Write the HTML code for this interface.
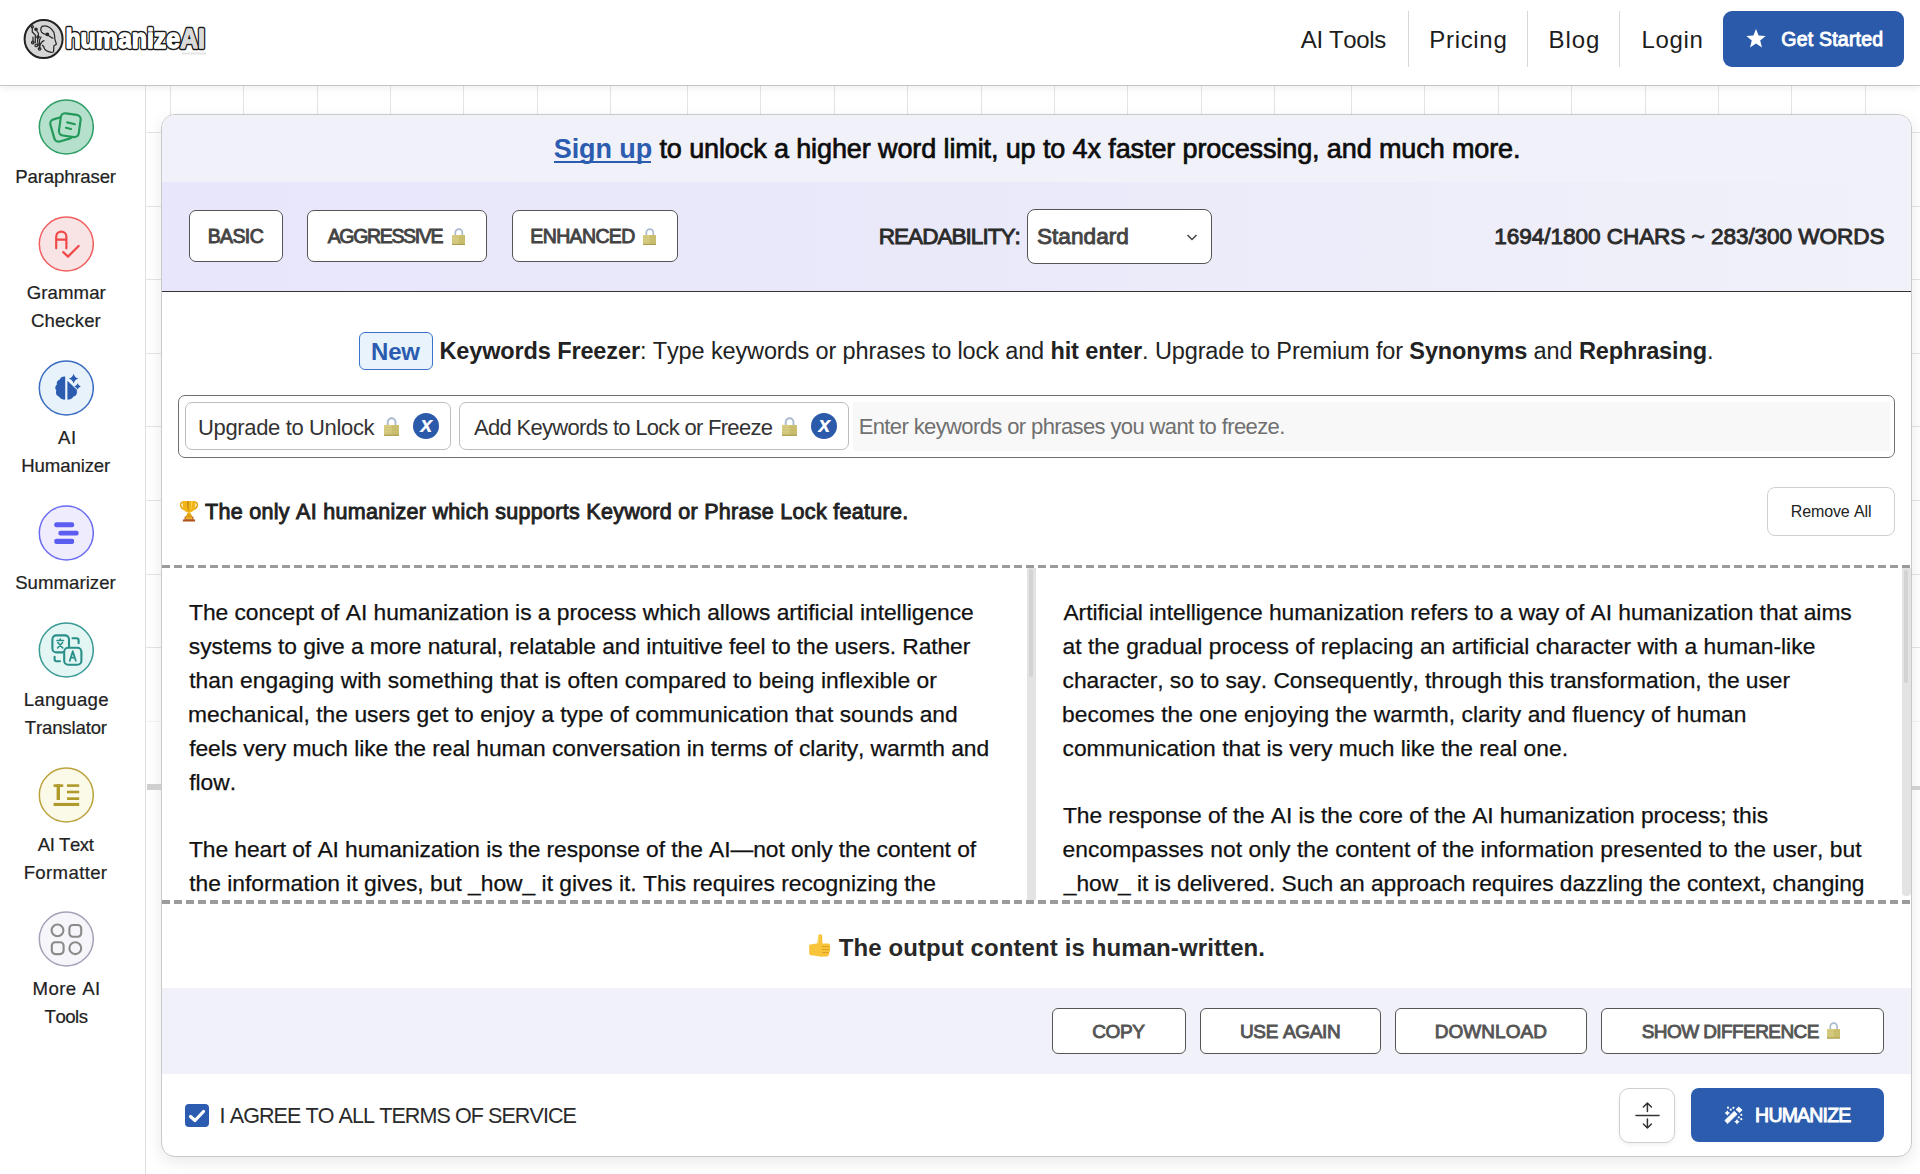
<!DOCTYPE html>
<html><head><meta charset="utf-8">
<style>
*{box-sizing:border-box;margin:0;padding:0}
html,body{width:1920px;height:1174px;overflow:hidden;background:#fff;font-family:"Liberation Sans",sans-serif;color:#222}
.abs{position:absolute}
.t{position:absolute;white-space:nowrap;font-kerning:none}
#header{position:absolute;left:0;top:0;width:1920px;height:86px;background:#fff;border-bottom:1px solid #c6c6c6;z-index:5;box-shadow:0 2px 8px rgba(0,0,0,.07)}
#sidebar{position:absolute;left:0;top:86px;width:146px;height:1088px;background:#fff;border-right:1px solid #e0e0e0;z-index:3}
#grid{position:absolute;left:146px;top:86px;width:1774px;height:1088px;background:#fff;-webkit-mask-image:linear-gradient(to bottom,#000 0,#000 560px,transparent 700px);mask-image:linear-gradient(to bottom,#000 0,#000 560px,transparent 700px)}
.sep{position:absolute;top:11px;width:1px;height:56px;background:#d8d8d8}
#card{position:absolute;left:161px;top:114px;width:1751px;height:1043px;border:1px solid #c9c9c9;border-radius:14px;background:#fff;overflow:hidden;box-shadow:0 5px 16px rgba(0,0,0,.09)}
.sbl{position:absolute;left:0;width:132.6px;text-align:center;font-size:18px;line-height:28px;color:#222;white-space:nowrap}
.bb{position:absolute;border:1.6px solid #555;border-radius:6px;background:#fff}
.chip{position:absolute;border:1.5px solid #bdbdbd;border-radius:6px;background:#fff}
</style></head><body>
<div id="grid"><svg width="1774" height="1088" style="position:absolute;left:0;top:0" shape-rendering="crispEdges"><rect x="24" y="0" width="1" height="1088" fill="#e4e4e4"/><rect x="97" y="0" width="1" height="1088" fill="#e4e4e4"/><rect x="171" y="0" width="1" height="1088" fill="#e4e4e4"/><rect x="244" y="0" width="1" height="1088" fill="#e4e4e4"/><rect x="317" y="0" width="1" height="1088" fill="#e4e4e4"/><rect x="391" y="0" width="1" height="1088" fill="#e4e4e4"/><rect x="464" y="0" width="1" height="1088" fill="#e4e4e4"/><rect x="541" y="0" width="1" height="1088" fill="#e4e4e4"/><rect x="614" y="0" width="1" height="1088" fill="#e4e4e4"/><rect x="688" y="0" width="1" height="1088" fill="#e4e4e4"/><rect x="761" y="0" width="1" height="1088" fill="#e4e4e4"/><rect x="835" y="0" width="1" height="1088" fill="#e4e4e4"/><rect x="908" y="0" width="1" height="1088" fill="#e4e4e4"/><rect x="981" y="0" width="1" height="1088" fill="#e4e4e4"/><rect x="1055" y="0" width="1" height="1088" fill="#e4e4e4"/><rect x="1128" y="0" width="1" height="1088" fill="#e4e4e4"/><rect x="1205" y="0" width="1" height="1088" fill="#e4e4e4"/><rect x="1278" y="0" width="1" height="1088" fill="#e4e4e4"/><rect x="1352" y="0" width="1" height="1088" fill="#e4e4e4"/><rect x="1425" y="0" width="1" height="1088" fill="#e4e4e4"/><rect x="1499" y="0" width="1" height="1088" fill="#e4e4e4"/><rect x="1572" y="0" width="1" height="1088" fill="#e4e4e4"/><rect x="1645" y="0" width="1" height="1088" fill="#e4e4e4"/><rect x="1719" y="0" width="1" height="1088" fill="#e4e4e4"/><rect x="0" y="46" width="1774" height="1" fill="#e4e4e4"/><rect x="0" y="120" width="1774" height="1" fill="#e4e4e4"/><rect x="0" y="193" width="1774" height="1" fill="#e4e4e4"/><rect x="0" y="267" width="1774" height="1" fill="#e4e4e4"/><rect x="0" y="340" width="1774" height="1" fill="#e4e4e4"/><rect x="0" y="414" width="1774" height="1" fill="#e4e4e4"/><rect x="0" y="488" width="1774" height="1" fill="#e4e4e4"/><rect x="0" y="561" width="1774" height="1" fill="#e4e4e4"/><rect x="0" y="635" width="1774" height="1" fill="#e4e4e4"/><rect x="0" y="708" width="1774" height="1" fill="#e4e4e4"/><rect x="0" y="782" width="1774" height="1" fill="#e4e4e4"/><rect x="0" y="856" width="1774" height="1" fill="#e4e4e4"/></svg></div>
<div id="header">
<!-- logo -->
  <svg class="abs" style="left:0;top:0" width="230" height="80" viewBox="0 0 230 80">
    <circle cx="43.6" cy="39" r="19" fill="#d6d6d6" stroke="#222" stroke-width="2"/>
    <g fill="none" stroke="#2a2a2a" stroke-width="1.25" stroke-linejoin="round" stroke-linecap="round">
      <path d="M42.1 26.4 C45 25.5 50 26 53.9 32.4 C54.6 35 54.8 37 54.8 38.9 L56.4 44.2 L53.9 45.8 L53.5 52 L51.1 52.4 C48 51.5 45 50 44.5 48.7 C44 47 43.5 46 42.5 45.4"/>
      <path d="M42.1 26.4 C40.5 28 40.5 30 41.5 32 C43 34 48 35 50 36.5 C51 37.5 52 38 53 38"/>
      <circle cx="47.3" cy="34.3" r="1.3" fill="#2a2a2a"/>
      <path d="M32.3 27.3 L32.3 32 L35.3 35 L35.3 42.5 M36 29.5 L38.5 33.5 L37.5 41 L38.3 45.4 M33 37 L33 42.5 M41 37 L39.5 40 L39.5 48.5 M44 40.6 C41.5 41.5 40 43 39.5 48.5"/>
      <circle cx="32.3" cy="26.8" r="1.1"/><circle cx="32.8" cy="42.5" r="1.3"/><circle cx="36.3" cy="45.4" r="1.3"/><circle cx="39.6" cy="48.8" r="1.3"/><circle cx="36" cy="29.2" r="1.2" fill="#2a2a2a"/><circle cx="38" cy="37" r="1.2" fill="#2a2a2a"/>
    </g>
    <g transform="translate(65.4 48.3) scale(0.873 1)" font-family="Liberation Sans" font-weight="bold" font-size="28.5" stroke-linejoin="round"><text x="0.00" y="0" fill="#fff" stroke="#1a1a1a" stroke-width="4.4" paint-order="stroke">h</text><text x="0.00" y="0" fill="#fff" stroke="#fff" stroke-width="1.4">h</text><text x="17.41" y="0" fill="#fff" stroke="#1a1a1a" stroke-width="4.4" paint-order="stroke">u</text><text x="17.41" y="0" fill="#fff" stroke="#fff" stroke-width="1.4">u</text><text x="34.82" y="0" fill="#fff" stroke="#1a1a1a" stroke-width="4.4" paint-order="stroke">m</text><text x="34.82" y="0" fill="#fff" stroke="#fff" stroke-width="1.4">m</text><text x="60.16" y="0" fill="#fff" stroke="#1a1a1a" stroke-width="4.4" paint-order="stroke">a</text><text x="60.16" y="0" fill="#fff" stroke="#fff" stroke-width="1.4">a</text><text x="76.01" y="0" fill="#fff" stroke="#1a1a1a" stroke-width="4.4" paint-order="stroke">n</text><text x="76.01" y="0" fill="#fff" stroke="#fff" stroke-width="1.4">n</text><text x="93.42" y="0" fill="#fff" stroke="#1a1a1a" stroke-width="4.4" paint-order="stroke">i</text><text x="93.42" y="0" fill="#fff" stroke="#fff" stroke-width="1.4">i</text><text x="101.34" y="0" fill="#fff" stroke="#1a1a1a" stroke-width="4.4" paint-order="stroke">z</text><text x="101.34" y="0" fill="#fff" stroke="#fff" stroke-width="1.4">z</text><text x="115.59" y="0" fill="#fff" stroke="#1a1a1a" stroke-width="4.4" paint-order="stroke">e</text><text x="115.59" y="0" fill="#fff" stroke="#fff" stroke-width="1.4">e</text><text x="131.44" y="0" fill="#dadada" stroke="#1a1a1a" stroke-width="4.4" paint-order="stroke">A</text><text x="131.44" y="0" fill="#dadada" stroke="#dadada" stroke-width="1.4">A</text><text x="152.02" y="0" fill="#dadada" stroke="#1a1a1a" stroke-width="4.4" paint-order="stroke">I</text><text x="152.02" y="0" fill="#dadada" stroke="#dadada" stroke-width="1.4">I</text></g>
    <rect x="182" y="52.5" width="24" height="2" fill="#e6e6e6"/>
  </svg>
  <div class="t" style="left:1300.85px;top:24.18px;font-size:24px;line-height:31px;color:#1d1d1d;letter-spacing:-0.388px;">AI Tools</div>
<div class="sep" style="left:1408px"></div>
<div class="t" style="left:1429.28px;top:24.18px;font-size:24px;line-height:31px;color:#1d1d1d;letter-spacing:0.684px;">Pricing</div>
<div class="sep" style="left:1527px"></div>
<div class="t" style="left:1548.53px;top:24.18px;font-size:24px;line-height:31px;color:#1d1d1d;letter-spacing:0.927px;">Blog</div>
<div class="sep" style="left:1619px"></div>
<div class="t" style="left:1641.43px;top:24.18px;font-size:24px;line-height:31px;color:#1d1d1d;letter-spacing:0.664px;">Login</div>
<div class="abs" style="left:1723.00px;top:11.00px;width:181.00px;height:56.00px;border-radius:9px;background:#2b5aab"></div>
<svg class="abs" style="left:1745px;top:28px" width="22" height="21" viewBox="0 0 22 21"><path d="M11 1 L13.6 7.6 L20.6 8 L15.2 12.5 L17 19.5 L11 15.6 L5 19.5 L6.8 12.5 L1.4 8 L8.4 7.6 Z" fill="#fff"/></svg>
<div class="t" style="left:1781.32px;top:26.54px;font-size:19.5px;line-height:25px;color:#fff;letter-spacing:0.212px;-webkit-text-stroke:0.9px #fff;">Get Started</div>
</div>
<div id="sidebar">
<svg class="abs" style="left:38px;top:13px" width="56" height="56" viewBox="0 0 56 56"><circle cx="28.3" cy="28" r="27" fill="#b5e0cc" stroke="#2e9e66" stroke-width="1.5"/><g fill="none" stroke="#23995a" stroke-width="2.2" stroke-linejoin="round">
<rect x="14" y="18.5" width="19" height="23" rx="4.5" transform="rotate(-16 23.5 30)"/>
<rect x="21.8" y="15" width="20" height="22.4" rx="4.5" transform="rotate(8 31.8 26.2)" fill="#b5e0cc"/>
<path d="M29.2 23.4 L36.8 25.2 M28 28.8 L33 30" stroke-linecap="round"/></g></svg>
<svg class="abs" style="left:38px;top:130px" width="56" height="56" viewBox="0 0 56 56"><circle cx="28.3" cy="28" r="27" fill="#f8e4e5" stroke="#f06060" stroke-width="1.5"/><g fill="none" stroke="#f04848" stroke-width="2.2" stroke-linecap="round" stroke-linejoin="round">
<path d="M18.2 32.3 V20.7 A5.1 5.1 0 0 1 28.4 20.7 V32.3 M18.2 23.6 H28.4"/>
<path d="M25.2 36.1 L30 40.6 L40.6 30"/></g></svg>
<svg class="abs" style="left:38px;top:274px" width="56" height="56" viewBox="0 0 56 56"><circle cx="28.3" cy="28" r="27" fill="#e8f2fb" stroke="#3a6cc0" stroke-width="1.5"/><g fill="#2b5cb0">
<path d="M27.2 16.6 C24.5 16.2 22.4 17.6 21.9 19.6 C19.6 20.1 18.3 22.4 18.9 24.6 C17 25.9 16.7 29 18.3 30.6 C17.3 33.2 18.6 36 21 36.6 C22 38.7 24.5 40 27.2 39.6 Z"/>
<path d="M29.4 20.8 V39.6 C32 40 34.5 38.8 35.4 36.6 C38 36.2 39.6 33.6 38.7 31 C39.2 30.4 39.1 29.9 38.6 29.6 Z"/>
<path d="M35.6 13.700000000000001 Q36.68 17.52 40.5 18.6 Q36.68 19.68 35.6 23.5 Q34.52 19.68 30.700000000000003 18.6 Q34.52 17.52 35.6 13.700000000000001 Z"/><path d="M39.6 23.2 Q40.30 25.70 42.800000000000004 26.4 Q40.30 27.10 39.6 29.599999999999998 Q38.90 27.10 36.4 26.4 Q38.90 25.70 39.6 23.2 Z"/></g></svg>
<svg class="abs" style="left:38px;top:419px" width="56" height="56" viewBox="0 0 56 56"><circle cx="28.3" cy="28" r="27" fill="#efedfd" stroke="#6b6cf2" stroke-width="1.5"/><g fill="#5b5cf0"><rect x="16.3" y="17.2" width="19.8" height="5.1" rx="2"/><rect x="20.4" y="25.8" width="20.2" height="4.8" rx="2"/><rect x="16.3" y="33.8" width="19.8" height="5.1" rx="2"/></g></svg>
<svg class="abs" style="left:38px;top:536px" width="56" height="56" viewBox="0 0 56 56"><circle cx="28.3" cy="28" r="27" fill="#e3f6f4" stroke="#3a9a94" stroke-width="1.5"/><g fill="none" stroke="#2a8f89" stroke-width="2.1" stroke-linecap="round" stroke-linejoin="round">
<rect x="14.4" y="13.4" width="16.6" height="17" rx="4"/>
<rect x="26.2" y="25.8" width="17.2" height="17" rx="4" fill="#e3f6f4"/>
<path d="M34.5 16.2 H38.6 A2 2 0 0 1 40.6 18.2 V21.3 M16.6 34.7 V37.2 A2 2 0 0 0 18.6 39.2 H22"/>
<path d="M19 18.5 H25.5 M22.2 17 V18.5 M19.8 20.5 L24.8 26 M24.6 20.5 L19.6 26" stroke-width="1.6"/>
<path d="M31.8 38.8 L34.8 29.2 L37.8 38.8 M32.8 35.6 H36.8" stroke-width="1.8"/></g></svg>
<svg class="abs" style="left:38px;top:680.5px" width="56" height="56" viewBox="0 0 56 56"><circle cx="28.3" cy="28" r="27" fill="#fbf9e8" stroke="#bba43e" stroke-width="1.5"/><g fill="#b09a2c"><rect x="15.6" y="17.3" width="9.6" height="2.7"/><rect x="18.6" y="17.3" width="3.4" height="15.7"/>
<rect x="29" y="17.3" width="12.2" height="2.6"/><rect x="29" y="23.7" width="12.2" height="2.6"/><rect x="29" y="30.3" width="12.2" height="2.7"/><rect x="15.6" y="35.9" width="25.6" height="3.1"/></g></svg>
<svg class="abs" style="left:38px;top:825px" width="56" height="56" viewBox="0 0 56 56"><circle cx="28.3" cy="28" r="27" fill="#f6f6fa" stroke="#a3a3b8" stroke-width="1.5"/><g fill="none" stroke="#8a8a8a" stroke-width="2.1"><circle cx="19.5" cy="19.4" r="5.9"/><rect x="31.4" y="14" width="11.8" height="11.8" rx="3.5"/><rect x="13.8" y="31.3" width="11.8" height="11.8" rx="3.5"/><circle cx="37.3" cy="37.2" r="5.9"/></g></svg>
<div class="abs" style="left:147px;top:698px;width:14px;height:6px;background:#cfcfcf"></div>
<div class="t" style="left:15.37px;top:78.55px;font-size:18.6px;line-height:24px;color:#222;letter-spacing:-0.162px;-webkit-text-stroke:0.2px #222;">Paraphraser</div>
<div class="t" style="left:26.66px;top:195.15px;font-size:18.6px;line-height:24px;color:#222;letter-spacing:0.102px;-webkit-text-stroke:0.2px #222;">Grammar</div>
<div class="t" style="left:30.96px;top:222.75px;font-size:18.6px;line-height:24px;color:#222;letter-spacing:0.099px;-webkit-text-stroke:0.2px #222;">Checker</div>
<div class="t" style="left:57.96px;top:339.95px;font-size:18.6px;line-height:24px;color:#222;letter-spacing:0.679px;-webkit-text-stroke:0.2px #222;">AI</div>
<div class="t" style="left:21.27px;top:367.55px;font-size:18.6px;line-height:24px;color:#222;letter-spacing:-0.112px;-webkit-text-stroke:0.2px #222;">Humanizer</div>
<div class="t" style="left:15.16px;top:485.05px;font-size:18.6px;line-height:24px;color:#222;letter-spacing:0.045px;-webkit-text-stroke:0.2px #222;">Summarizer</div>
<div class="t" style="left:23.67px;top:602.35px;font-size:18.6px;line-height:24px;color:#222;letter-spacing:0.314px;-webkit-text-stroke:0.2px #222;">Language</div>
<div class="t" style="left:24.78px;top:629.95px;font-size:18.6px;line-height:24px;color:#222;letter-spacing:-0.156px;-webkit-text-stroke:0.2px #222;">Translator</div>
<div class="t" style="left:37.86px;top:746.95px;font-size:18.6px;line-height:24px;color:#222;letter-spacing:-0.490px;-webkit-text-stroke:0.2px #222;">AI Text</div>
<div class="t" style="left:23.67px;top:774.55px;font-size:18.6px;line-height:24px;color:#222;letter-spacing:0.353px;-webkit-text-stroke:0.2px #222;">Formatter</div>
<div class="t" style="left:32.47px;top:891.35px;font-size:18.6px;line-height:24px;color:#222;letter-spacing:0.437px;-webkit-text-stroke:0.2px #222;">More AI</div>
<div class="t" style="left:44.58px;top:918.75px;font-size:18.6px;line-height:24px;color:#222;letter-spacing:-0.498px;-webkit-text-stroke:0.2px #222;">Tools</div>
</div>
<div class="abs" style="left:1912px;top:786px;width:8px;height:4px;background:#cfcfcf;z-index:2"></div>
<div id="card">
<div class="abs" style="left:0.00px;top:0.00px;width:1749.00px;height:67.00px;background:#f1f1f9"></div>
<div class="t" style="left:391.82px;top:16.89px;font-size:27px;line-height:35px;color:#0d0d0d;letter-spacing:-0.109px;-webkit-text-stroke:0.7px #0d0d0d;"><b style="color:#2b5cb0;-webkit-text-stroke:0">Sign up</b> to unlock a higher word limit, up to 4x faster processing, and much more.</div>
<div class="abs" style="left:392.00px;top:45.50px;width:97.00px;height:2.00px;background:#2b5cb0"></div>
<div class="abs" style="left:0.00px;top:67.00px;width:1749.00px;height:110.00px;background:linear-gradient(to right,#e7e6fb 0%,#eae9fa 45%,#f1f1f9 100%);border-bottom:1.6px solid #333"></div>
<div class="abs" style="left:26.60px;top:95.40px;width:94.90px;height:52.10px;border:1.8px solid #555;border-radius:7px;background:#fff"></div>
<div class="t" style="left:45.70px;top:109.34px;font-size:19.5px;line-height:25px;color:#444;letter-spacing:-0.619px;-webkit-text-stroke:0.9px #444;">BASIC</div>
<div class="abs" style="left:145.30px;top:95.40px;width:179.70px;height:52.10px;border:1.8px solid #555;border-radius:7px;background:#fff"></div>
<div class="t" style="left:165.66px;top:109.34px;font-size:19.5px;line-height:25px;color:#444;letter-spacing:-1.333px;-webkit-text-stroke:0.9px #444;">AGGRESSIVE</div>
<svg class="abs" style="left:289.50px;top:112.60px" width="13.68" height="16.92" viewBox="0 0 15.2 18.8"><path d="M3.7 9 V5.2 A3.9 3.9 0 0 1 11.5 5.2 V9" fill="none" stroke="#a9bad0" stroke-width="1.9"/><rect x="0" y="7.9" width="15.2" height="10.9" rx="0.8" fill="#cbbf70"/><rect x="0" y="7.9" width="7.6" height="10.9" fill="#d6cc82"/><path d="M0.5 10.5 H14.7 M0.5 13.2 H14.7 M0.5 15.9 H14.7" stroke="#b8aa5c" stroke-width="0.5" opacity="0.5"/><rect x="0" y="17.6" width="15.2" height="1.2" fill="#a89a50"/></svg>
<div class="abs" style="left:349.90px;top:95.40px;width:166.60px;height:52.10px;border:1.8px solid #555;border-radius:7px;background:#fff"></div>
<div class="t" style="left:368.30px;top:109.34px;font-size:19.5px;line-height:25px;color:#444;letter-spacing:-0.628px;-webkit-text-stroke:0.9px #444;">ENHANCED</div>
<svg class="abs" style="left:480.70px;top:112.60px" width="13.68" height="16.92" viewBox="0 0 15.2 18.8"><path d="M3.7 9 V5.2 A3.9 3.9 0 0 1 11.5 5.2 V9" fill="none" stroke="#a9bad0" stroke-width="1.9"/><rect x="0" y="7.9" width="15.2" height="10.9" rx="0.8" fill="#cbbf70"/><rect x="0" y="7.9" width="7.6" height="10.9" fill="#d6cc82"/><path d="M0.5 10.5 H14.7 M0.5 13.2 H14.7 M0.5 15.9 H14.7" stroke="#b8aa5c" stroke-width="0.5" opacity="0.5"/><rect x="0" y="17.6" width="15.2" height="1.2" fill="#a89a50"/></svg>
<div class="t" style="left:716.75px;top:107.36px;font-size:22.6px;line-height:29px;color:#2a2a2a;letter-spacing:-1.010px;-webkit-text-stroke:0.9px #2a2a2a;">READABILITY:</div>
<div class="abs" style="left:864.80px;top:93.80px;width:184.90px;height:55.00px;border:1.6px solid #555;border-radius:8px;background:#fff"></div>
<div class="t" style="left:874.97px;top:107.36px;font-size:22.6px;line-height:29px;color:#444;letter-spacing:0.023px;-webkit-text-stroke:0.9px #444;">Standard</div>
<svg class="abs" style="left:1024px;top:118px" width="12" height="9" viewBox="0 0 12 9"><path d="M1.5 2 L6 6.5 L10.5 2" fill="none" stroke="#444" stroke-width="1.5"/></svg>
<div class="t" style="left:1332.28px;top:107.36px;font-size:22.6px;line-height:29px;color:#2a2a2a;letter-spacing:-0.071px;-webkit-text-stroke:0.9px #2a2a2a;">1694/1800 CHARS ~ 283/300 WORDS</div>
<div class="abs" style="left:197.40px;top:217.00px;width:73.60px;height:38.00px;border:1.6px solid #3b72c8;border-radius:6px;background:#e8f3fb"></div>
<div class="t" style="left:209.09px;top:220.98px;font-size:24px;line-height:31px;color:#2b5cb0;letter-spacing:-0.245px;font-weight:bold;">New</div>
<div class="t" style="left:277.43px;top:221.15px;font-size:23.5px;line-height:31px;color:#222;letter-spacing:-0.123px;"><b>Keywords Freezer</b>: Type keywords or phrases to lock and <b>hit enter</b>. Upgrade to Premium for <b>Synonyms</b> and <b>Rephrasing</b>.</div>
<div class="abs" style="left:16.00px;top:280.00px;width:1717.00px;height:63.00px;border:1.8px solid #707070;border-radius:7px;background:#fff"></div>
<div class="abs" style="left:691.00px;top:287.00px;width:1037.00px;height:49.00px;background:#f8f8f8"></div>
<div class="abs" style="left:23.00px;top:287.00px;width:266.00px;height:47.50px;border:1.5px solid #bdbdbd;border-radius:7px;background:#fff"></div>
<div class="t" style="left:36.00px;top:297.87px;font-size:22px;line-height:29px;color:#333;letter-spacing:-0.353px;">Upgrade to Unlock</div>
<svg class="abs" style="left:222.00px;top:302.10px" width="15.20" height="18.80" viewBox="0 0 15.2 18.8"><path d="M3.7 9 V5.2 A3.9 3.9 0 0 1 11.5 5.2 V9" fill="none" stroke="#a9bad0" stroke-width="1.9"/><rect x="0" y="7.9" width="15.2" height="10.9" rx="0.8" fill="#cbbf70"/><rect x="0" y="7.9" width="7.6" height="10.9" fill="#d6cc82"/><path d="M0.5 10.5 H14.7 M0.5 13.2 H14.7 M0.5 15.9 H14.7" stroke="#b8aa5c" stroke-width="0.5" opacity="0.5"/><rect x="0" y="17.6" width="15.2" height="1.2" fill="#a89a50"/></svg>
<div class="abs" style="left:251.00px;top:298.00px;width:26.00px;height:26.00px;border-radius:50%;background:#2b5aab"></div>
<div class="t" style="left:258.15px;top:295.17px;font-size:22px;line-height:29px;color:#fff;letter-spacing:0.000px;font-weight:bold;font-style:italic;">x</div>
<div class="abs" style="left:297.00px;top:287.00px;width:390.00px;height:47.50px;border:1.5px solid #bdbdbd;border-radius:7px;background:#fff"></div>
<div class="t" style="left:311.96px;top:297.87px;font-size:22px;line-height:29px;color:#333;letter-spacing:-0.694px;">Add Keywords to Lock or Freeze</div>
<svg class="abs" style="left:619.50px;top:302.10px" width="15.20" height="18.80" viewBox="0 0 15.2 18.8"><path d="M3.7 9 V5.2 A3.9 3.9 0 0 1 11.5 5.2 V9" fill="none" stroke="#a9bad0" stroke-width="1.9"/><rect x="0" y="7.9" width="15.2" height="10.9" rx="0.8" fill="#cbbf70"/><rect x="0" y="7.9" width="7.6" height="10.9" fill="#d6cc82"/><path d="M0.5 10.5 H14.7 M0.5 13.2 H14.7 M0.5 15.9 H14.7" stroke="#b8aa5c" stroke-width="0.5" opacity="0.5"/><rect x="0" y="17.6" width="15.2" height="1.2" fill="#a89a50"/></svg>
<div class="abs" style="left:649.00px;top:298.00px;width:26.00px;height:26.00px;border-radius:50%;background:#2b5aab"></div>
<div class="t" style="left:656.15px;top:295.17px;font-size:22px;line-height:29px;color:#fff;letter-spacing:0.000px;font-weight:bold;font-style:italic;">x</div>
<div class="t" style="left:696.70px;top:297.37px;font-size:22px;line-height:29px;color:#707070;letter-spacing:-0.615px;">Enter keywords or phrases you want to freeze.</div>
<svg class="abs" style="left:16.0px;top:385.0px" width="22" height="22" viewBox="0 0 22 22"><path d="M5.2 2.2 C1.6 1.8 1.4 7.6 6.4 9.6 M16.8 2.2 C20.4 1.8 20.6 7.6 15.6 9.6" fill="none" stroke="#e3a215" stroke-width="1.5"/><path d="M4.6 1 H17.4 V5.5 C17.4 9.8 14.6 12.6 11 12.6 C7.4 12.6 4.6 9.8 4.6 5.5 Z" fill="#f1b519"/><path d="M9.2 1.2 C9 5 9.6 9 10.8 12 C10.6 8.5 10.4 5 10.6 1.2 Z" fill="#b98010"/><path d="M13.2 1.2 C13.4 5 13 8.5 12.2 11.8 C13.6 9 14.2 5 14.2 1.2 Z" fill="#fbd65a"/><path d="M9.8 12.4 H12.2 L14.5 17 H7.5 Z" fill="#e6a615"/><rect x="6.6" y="16.6" width="8.8" height="2.8" fill="#c46c18"/><rect x="8" y="17.2" width="6" height="1.6" fill="#f3c52c"/><path d="M5.4 19.2 H16.6 L17.4 21.4 H4.6 Z" fill="#b0501a"/></svg>
<div class="t" style="left:43.02px;top:382.75px;font-size:21.5px;line-height:28px;color:#222;letter-spacing:0.292px;-webkit-text-stroke:0.9px #222;">The only AI humanizer which supports Keyword or Phrase Lock feature.</div>
<div class="abs" style="left:1605.00px;top:371.50px;width:127.50px;height:49.50px;border:1.5px solid #d0d0d0;border-radius:8px;background:#fff"></div>
<div class="t" style="left:1628.69px;top:386.35px;font-size:16px;line-height:21px;color:#222;letter-spacing:-0.114px;">Remove All</div>
<div class="abs" style="left:0.00px;top:449.50px;width:1749.00px;height:3.50px;background:repeating-linear-gradient(to right,#9b9b9b 0 8px,transparent 8px 12px)"></div>
<div class="t" style="left:26.99px;top:482.30px;font-size:22.8px;line-height:30px;color:#111;letter-spacing:-0.027px;-webkit-text-stroke:0.25px #111;">The concept of AI humanization is a process which allows artificial intelligence</div>
<div class="t" style="left:26.87px;top:516.15px;font-size:22.8px;line-height:30px;color:#111;letter-spacing:-0.084px;-webkit-text-stroke:0.25px #111;">systems to give a more natural, relatable and intuitive feel to the users. Rather</div>
<div class="t" style="left:27.15px;top:550.00px;font-size:22.8px;line-height:30px;color:#111;letter-spacing:0.052px;-webkit-text-stroke:0.25px #111;">than engaging with something that is often compared to being inflexible or</div>
<div class="t" style="left:25.99px;top:583.85px;font-size:22.8px;line-height:30px;color:#111;letter-spacing:0.025px;-webkit-text-stroke:0.25px #111;">mechanical, the users get to enjoy a type of communication that sounds and</div>
<div class="t" style="left:27.18px;top:617.70px;font-size:22.8px;line-height:30px;color:#111;letter-spacing:-0.058px;-webkit-text-stroke:0.25px #111;">feels very much like the real human conversation in terms of clarity, warmth and</div>
<div class="t" style="left:27.18px;top:651.55px;font-size:22.8px;line-height:30px;color:#111;letter-spacing:0.000px;-webkit-text-stroke:0.25px #111;">flow.</div>
<div class="t" style="left:26.99px;top:719.25px;font-size:22.8px;line-height:30px;color:#111;letter-spacing:-0.064px;-webkit-text-stroke:0.25px #111;">The heart of AI humanization is the response of the AI—not only the content of</div>
<div class="t" style="left:27.15px;top:753.10px;font-size:22.8px;line-height:30px;color:#111;letter-spacing:0.005px;-webkit-text-stroke:0.25px #111;">the information it gives, but _how_ it gives it. This requires recognizing the</div>
<div class="t" style="left:901.46px;top:482.30px;font-size:22.8px;line-height:30px;color:#111;letter-spacing:-0.046px;-webkit-text-stroke:0.25px #111;">Artificial intelligence humanization refers to a way of AI humanization that aims</div>
<div class="t" style="left:900.53px;top:516.15px;font-size:22.8px;line-height:30px;color:#111;letter-spacing:0.035px;-webkit-text-stroke:0.25px #111;">at the gradual process of replacing an artificial character with a human-like</div>
<div class="t" style="left:900.53px;top:550.00px;font-size:22.8px;line-height:30px;color:#111;letter-spacing:-0.032px;-webkit-text-stroke:0.25px #111;">character, so to say. Consequently, through this transformation, the user</div>
<div class="t" style="left:900.03px;top:583.85px;font-size:22.8px;line-height:30px;color:#111;letter-spacing:0.041px;-webkit-text-stroke:0.25px #111;">becomes the one enjoying the warmth, clarity and fluency of human</div>
<div class="t" style="left:900.53px;top:617.70px;font-size:22.8px;line-height:30px;color:#111;letter-spacing:-0.002px;-webkit-text-stroke:0.25px #111;">communication that is very much like the real one.</div>
<div class="t" style="left:900.99px;top:685.40px;font-size:22.8px;line-height:30px;color:#111;letter-spacing:-0.064px;-webkit-text-stroke:0.25px #111;">The response of the AI is the core of the AI humanization process; this</div>
<div class="t" style="left:900.53px;top:719.25px;font-size:22.8px;line-height:30px;color:#111;letter-spacing:0.059px;-webkit-text-stroke:0.25px #111;">encompasses not only the content of the information presented to the user, but</div>
<div class="t" style="left:901.85px;top:753.10px;font-size:22.8px;line-height:30px;color:#111;letter-spacing:-0.068px;-webkit-text-stroke:0.25px #111;">_how_ it is delivered. Such an approach requires dazzling the context, changing</div>
<div class="abs" style="left:865.00px;top:453.00px;width:9.00px;height:332.00px;background:#e3e3e3"></div>
<div class="abs" style="left:867.00px;top:454.00px;width:4.00px;height:108.00px;background:#d3d3d3;border-radius:2px"></div>
<div class="abs" style="left:1740.00px;top:453.00px;width:9.00px;height:328.00px;background:#e3e3e3;border-radius:0 0 4px 4px"></div>
<div class="abs" style="left:1742.00px;top:455.00px;width:4.00px;height:113.00px;background:#d3d3d3;border-radius:2px"></div>
<div class="abs" style="left:0.00px;top:785.00px;width:1749.00px;height:3.50px;background:repeating-linear-gradient(to right,#9b9b9b 0 8px,transparent 8px 12px)"></div>
<svg class="abs" style="left:647.0px;top:819.0px" width="22" height="23" viewBox="0 0 22 23"><path d="M1.2 10.6 L8 9.6 C9.2 7 8.4 3 9.4 1.2 C10.4 -0.2 13 0.2 13.2 2 L13.4 9.4 L19.6 9.4 C21.2 9.6 21.4 11.2 20.6 12.2 C21.6 12.8 21.6 14.6 20.6 15.2 C21.4 15.9 21.2 17.6 20 18.2 C20.6 19.2 20.2 21.6 18.2 22.6 L12.4 22.8 C8.4 22.2 4.4 21.2 1.8 21.2 C0.8 21.2 0.2 20.2 0.2 19 L0.2 12 C0.2 11.2 0.6 10.6 1.2 10.6 Z" fill="#f8c43a"/><path d="M13 12.6 H20.4 M13 15.6 H20.6 M13.2 18.6 H20" stroke="#d99c1c" stroke-width="0.9"/><path d="M9.6 2 C9.4 4 9.6 7 9.2 9.4" stroke="#fde08a" stroke-width="0.8" fill="none"/></svg>
<div class="t" style="left:676.73px;top:816.58px;font-size:24px;line-height:31px;color:#282828;letter-spacing:0.105px;font-weight:bold;">The output content is human-written.</div>
<div class="abs" style="left:0.00px;top:873.00px;width:1749.00px;height:86.00px;background:#f1f1f9"></div>
<div class="abs" style="left:890.00px;top:893.00px;width:134.00px;height:45.50px;border:1.6px solid #555;border-radius:6px;background:#fff"></div>
<div class="t" style="left:930.24px;top:903.51px;font-size:19px;line-height:25px;color:#555;letter-spacing:-0.421px;-webkit-text-stroke:0.9px #555;">COPY</div>
<div class="abs" style="left:1038.00px;top:893.00px;width:181.00px;height:45.50px;border:1.6px solid #555;border-radius:6px;background:#fff"></div>
<div class="t" style="left:1077.93px;top:903.51px;font-size:19px;line-height:25px;color:#555;letter-spacing:-0.332px;-webkit-text-stroke:0.9px #555;">USE AGAIN</div>
<div class="abs" style="left:1233.00px;top:893.00px;width:192.00px;height:45.50px;border:1.6px solid #555;border-radius:6px;background:#fff"></div>
<div class="t" style="left:1272.74px;top:903.51px;font-size:19px;line-height:25px;color:#555;letter-spacing:0.039px;-webkit-text-stroke:0.9px #555;">DOWNLOAD</div>
<div class="abs" style="left:1439.00px;top:893.00px;width:282.70px;height:45.50px;border:1.6px solid #555;border-radius:6px;background:#fff"></div>
<div class="t" style="left:1479.74px;top:903.51px;font-size:19px;line-height:25px;color:#555;letter-spacing:-0.579px;-webkit-text-stroke:0.9px #555;">SHOW DIFFERENCE</div>
<svg class="abs" style="left:1664.80px;top:907.00px" width="13.38" height="16.54" viewBox="0 0 15.2 18.8"><path d="M3.7 9 V5.2 A3.9 3.9 0 0 1 11.5 5.2 V9" fill="none" stroke="#a9bad0" stroke-width="1.9"/><rect x="0" y="7.9" width="15.2" height="10.9" rx="0.8" fill="#cbbf70"/><rect x="0" y="7.9" width="7.6" height="10.9" fill="#d6cc82"/><path d="M0.5 10.5 H14.7 M0.5 13.2 H14.7 M0.5 15.9 H14.7" stroke="#b8aa5c" stroke-width="0.5" opacity="0.5"/><rect x="0" y="17.6" width="15.2" height="1.2" fill="#a89a50"/></svg>
<div class="abs" style="left:22.80px;top:988.70px;width:23.80px;height:23.60px;border-radius:4px;background:#2b5cb0"></div>
<svg class="abs" style="left:22.8px;top:988.5px" width="24" height="24" viewBox="0 0 24 24"><path d="M5.5 12.5 L10 16.5 L18.5 7.5" fill="none" stroke="#fff" stroke-width="3.2" stroke-linecap="round" stroke-linejoin="round"/></svg>
<div class="t" style="left:57.62px;top:986.95px;font-size:21.5px;line-height:28px;color:#2a2a2a;letter-spacing:-0.913px;">I AGREE TO ALL TERMS OF SERVICE</div>
<div class="abs" style="left:1457.40px;top:973.00px;width:55.60px;height:54.50px;border:1.5px solid #cfcfcf;border-radius:10px;background:#fff;box-shadow:0 2px 4px rgba(0,0,0,.06)"></div>
<svg class="abs" style="left:1458.0px;top:973.0px" width="54" height="54" viewBox="0 0 54 54"><path d="M16 27.4 H39 M27.4 15 V23.5 M23.4 19 L27.4 15 L31.4 19 M27.4 31 V40 M23.4 36 L27.4 40 L31.4 36" fill="none" stroke="#333" stroke-width="1.5" stroke-linecap="round" stroke-linejoin="round"/></svg>
<div class="abs" style="left:1529.00px;top:973.00px;width:193.00px;height:54.00px;border-radius:8px;background:#2c5cad"></div>
<svg class="abs" style="left:1562.0px;top:991.0px" width="20" height="20" viewBox="0 0 20 20"><g fill="#fff" stroke="#fff" stroke-linejoin="round" stroke-width="0.8"><path d="M0.9 14.4 L10.4 5.2 L13.1 8.3 L3.5 17.6 Z"/><path d="M12 3.5 L14.7 1.1 L18.2 4.1 L15.5 6.6 Z"/></g><g fill="#fff"><path d="M3.30 4.20 Q4.08 6.22 6.10 7.00 Q4.08 7.78 3.30 9.80 Q2.52 7.78 0.50 7.00 Q2.52 6.22 3.30 4.20 Z"/><path d="M13.00 12.90 Q13.78 14.92 15.80 15.70 Q13.78 16.48 13.00 18.50 Q12.22 16.48 10.20 15.70 Q12.22 14.92 13.00 12.90 Z"/><circle cx="4.0" cy="1.7" r="1.1"/><circle cx="9.4" cy="1.8" r="1.1"/><circle cx="6.7" cy="3.7" r="1.1"/><circle cx="17.3" cy="8.8" r="1.1"/><circle cx="14.8" cy="11.4" r="1.1"/><circle cx="17.3" cy="13.2" r="1.1"/></g></svg>
<div class="t" style="left:1593.10px;top:987.94px;font-size:19.5px;line-height:25px;color:#fff;letter-spacing:-0.799px;-webkit-text-stroke:0.9px #fff;">HUMANIZE</div>
</div>
</body></html>
